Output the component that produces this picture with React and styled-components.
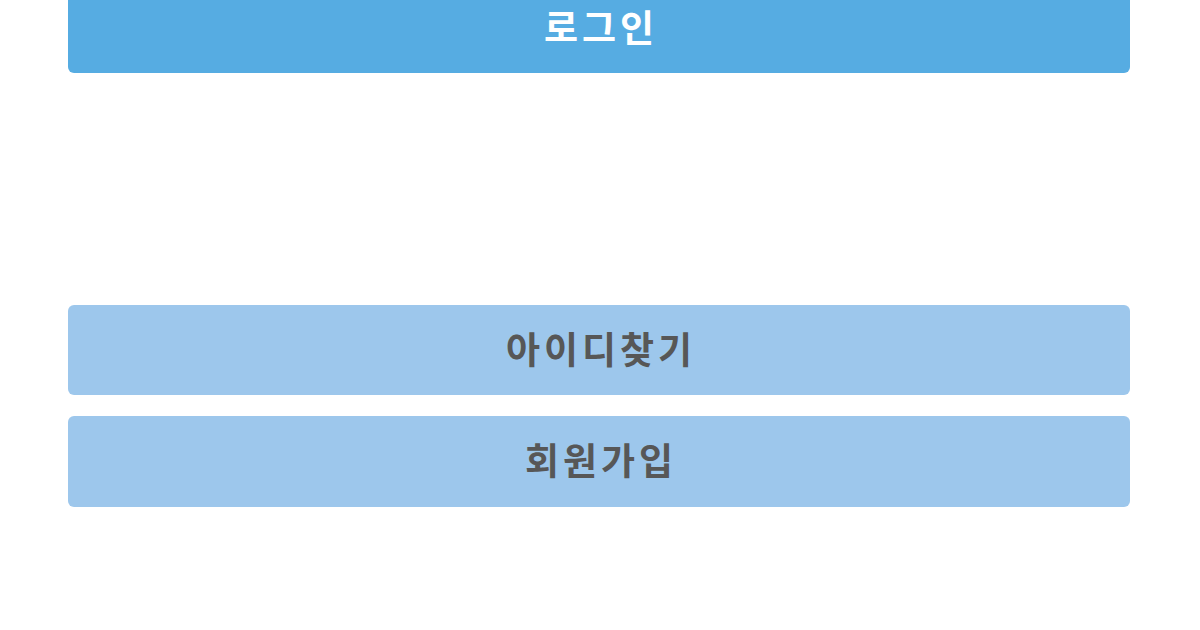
import React from 'react';
import styled, { createGlobalStyle } from 'styled-components';

const GlobalStyle = createGlobalStyle`
  html, body {
    margin: 0;
    padding: 0;
    background: #ffffff;
    overflow: hidden;
  }

  body {
    font-family: "Noto Sans CJK KR", "Noto Sans", sans-serif;
  }
`;

const Page = styled.main`
  display: flex;
  flex-direction: column;
  padding: 0 70px 0 68px;
  margin-top: -17px;
`;

const Button = styled.button`
  display: flex;
  align-items: center;
  justify-content: center;
  width: 100%;
  height: ${({ $tall }) => ($tall ? '91px' : '90px')};
  border: none;
  border-radius: 6px;
  padding: 0 0 5px 4px;
  font-family: inherit;
  font-size: 37px;
  font-weight: 700;
  letter-spacing: 4px;
  cursor: pointer;
  background: ${({ $primary }) => ($primary ? '#56ace2' : '#9dc7ec')};
  color: ${({ $primary }) => ($primary ? '#ffffff' : '#575757')};
`;

const LinkGroup = styled.div`
  display: flex;
  flex-direction: column;
  gap: 21px;
  margin-top: 232px;
`;

const App = () => (
  <>
    <GlobalStyle />
    <Page>
      <Button $primary>로그인</Button>

      <LinkGroup>
        <Button>아이디찾기</Button>
        <Button $tall>회원가입</Button>
      </LinkGroup>
    </Page>
  </>
);

export default App;
